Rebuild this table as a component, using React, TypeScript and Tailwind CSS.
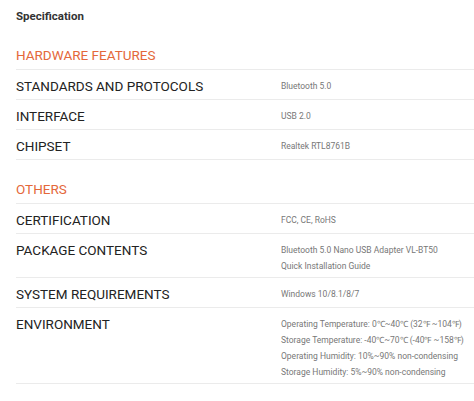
const sections = [
  {
    title: "HARDWARE FEATURES",
    rows: [
      { label: "STANDARDS AND PROTOCOLS", values: ["Bluetooth 5.0"] },
      { label: "INTERFACE", values: ["USB 2.0"] },
      { label: "CHIPSET", values: ["Realtek RTL8761B"] },
    ],
  },
  {
    title: "OTHERS",
    rows: [
      { label: "CERTIFICATION", values: ["FCC, CE, RoHS"] },
      {
        label: "PACKAGE CONTENTS",
        values: ["Bluetooth 5.0 Nano USB Adapter VL-BT50", "Quick Installation Guide"],
      },
      { label: "SYSTEM REQUIREMENTS", values: ["Windows 10/8.1/8/7"] },
      {
        label: "ENVIRONMENT",
        values: [
          "Operating Temperature: 0℃~40℃ (32℉ ~104℉)",
          "Storage Temperature: -40℃~70℃ (-40℉ ~158℉)",
          "Operating Humidity: 10%~90% non-condensing",
          "Storage Humidity: 5%~90% non-condensing",
        ],
      },
    ],
  },
];

export default function App() {
  return (
    <div className="min-h-screen bg-white pl-4 font-['Roboto',sans-serif]">
      <h3 className="pt-[8px] text-[11.5px] leading-[16px] font-bold text-[#333]">Specification</h3>

      {sections.map((s, i) => (
        <div key={s.title} className={i === 0 ? "mt-[22px]" : "mt-[20px]"}>
          <h4 className="pb-[5px] text-[13.5px] leading-[18px] text-[#e4683a]">{s.title}</h4>
          {s.rows.map((r) => (
            <div key={r.label} className="flex border-t border-[#ebebeb] pt-[6px] pb-[3px]">
              <div className="w-[265px] shrink-0 text-[13.5px] leading-[20px] text-[#222]">{r.label}</div>
              <div className="pt-[2px] text-[8.5px] leading-[16px] text-[#777]">
                {r.values.map((v) => (
                  <p key={v}>{v}</p>
                ))}
              </div>
            </div>
          ))}
          <div className="border-t border-[#ebebeb]" />
        </div>
      ))}
    </div>
  );
}
